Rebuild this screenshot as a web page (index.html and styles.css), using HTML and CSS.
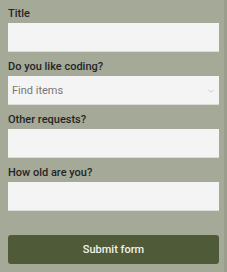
FILE: index.html
```html
<!DOCTYPE html>
<html>
<head>
<meta charset="utf-8">
<link rel="stylesheet" href="styles.css">
</head>
<body>
<form class="form">
  <div class="field">
    <label class="label">Title</label>
    <div class="input"></div>
  </div>
  <div class="field">
    <label class="label">Do you like coding?</label>
    <div class="input select">
      <span class="placeholder">Find items</span>
      <svg class="chev" width="6" height="4" viewBox="0 0 6 4"><path d="M0.5 0.8 L3 3.2 L5.5 0.8" fill="none" stroke="#c8c8c8" stroke-width="1"/></svg>
    </div>
  </div>
  <div class="field">
    <label class="label">Other requests?</label>
    <div class="input"></div>
  </div>
  <div class="field">
    <label class="label">How old are you?</label>
    <div class="input"></div>
  </div>
  <button type="button" class="submit">Submit form</button>
</form>
</body>
</html>
```
FILE: styles.css
```css
html, body {
  margin: 0;
  padding: 0;
  height: 100%;
}
body {
  background: #a4a998;
  font-family: Roboto, "Noto Sans", sans-serif;
  box-sizing: border-box;
  border-right: 3px solid #999e8d;
}
.form {
  display: flex;
  flex-direction: column;
  padding: 4px 5px 0 8px;
}
.field {
  display: flex;
  flex-direction: column;
}
.field + .field {
  margin-top: 5px;
}
.label {
  font-size: 11px;
  font-weight: 500;
  line-height: 19px;
  color: #262626;
}
.input {
  height: 29px;
  background: #f4f4f4;
  border-bottom: 1px solid #dcdcd6;
  box-sizing: border-box;
}
.select {
  display: flex;
  align-items: center;
  justify-content: space-between;
  padding: 0 5px 0 4px;
}
.placeholder {
  font-size: 11px;
  color: #777;
}
.chev {
  margin-top: 1px;
}
.submit {
  margin-top: 24px;
  height: 29px;
  background: #4e5a38;
  border: none;
  border-radius: 3px;
  color: #f2f2ec;
  font-family: Roboto, "Noto Sans", sans-serif;
  font-size: 11px;
  font-weight: 500;
}
```
